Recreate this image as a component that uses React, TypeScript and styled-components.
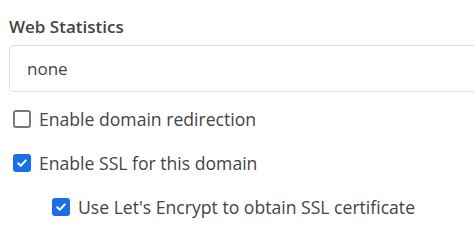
import styled, { createGlobalStyle } from 'styled-components';

const GlobalStyle = createGlobalStyle`
	html, body {
		margin: 0;
		padding: 0;
		background: #fff;
	}
	body {
		font-family: 'Open Sans', 'Noto Sans', sans-serif;
		color: #444;
	}
`;

const CheckIcon = () => (
	<svg width='12' height='12' viewBox='0 0 12 12' fill='none'>
		<path d='M2.2 6.3 L4.8 8.8 L9.8 3.4' stroke='#fff' strokeWidth='2' strokeLinecap='round' strokeLinejoin='round' />
	</svg>
);

type OptionProps = { label: string; checked?: boolean; nested?: boolean };

const Option = ({ label, checked = false, nested = false }: OptionProps) => (
	<OptionRow $nested={nested}>
		<Box $checked={checked}>{checked && <CheckIcon />}</Box>
		<OptionLabel>{label}</OptionLabel>
	</OptionRow>
);

const App = () => (
	<>
		<GlobalStyle />
		<Page>
			<FieldLabel>Web Statistics</FieldLabel>
			<SelectBox>none</SelectBox>
			<Options>
				<Option label='Enable domain redirection' />
				<Option label='Enable SSL for this domain' checked />
				<Option label="Use Let's Encrypt to obtain SSL certificate" checked nested />
			</Options>
		</Page>
	</>
);

export default App;

const Page = styled.div`
	padding: 15px 0 0 9px;
	overflow: hidden;
	width: 474px;
	box-sizing: border-box;
`;
const FieldLabel = styled.div`
	font-size: 17px;
	font-weight: 600;
	line-height: 24px;
	color: #444;
`;
const SelectBox = styled.div`
	margin-top: 6px;
	width: 520px;
	height: 47px;
	box-sizing: border-box;
	border: 1px solid #ddd;
	border-radius: 5px;
	padding-left: 17px;
	display: flex;
	align-items: center;
	font-size: 17px;
	color: #444;
`;
const Options = styled.div`
	display: flex;
	flex-direction: column;
	gap: 20px;
	margin-top: 15px;
`;
const OptionRow = styled.label<{ $nested: boolean }>`
	display: flex;
	align-items: center;
	gap: 8px;
	height: 24px;
	padding-left: ${(props) => (props.$nested ? '43px' : '4px')};
`;
const Box = styled.span<{ $checked: boolean }>`
	width: 18px;
	height: 18px;
	box-sizing: border-box;
	border-radius: 3px;
	display: flex;
	align-items: center;
	justify-content: center;
	background-color: ${(props) => (props.$checked ? '#1a6fe8' : '#fff')};
	border: 2px solid ${(props) => (props.$checked ? '#1a6fe8' : '#7a7a7a')};
`;
const OptionLabel = styled.span`
	font-size: 17.6px;
	font-weight: 500;
	color: #444;
`;
